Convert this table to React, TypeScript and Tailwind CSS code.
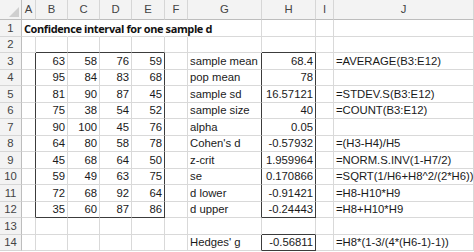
import React, { useLayoutEffect, useRef, useState } from "react";

const cols = ["A", "B", "C", "D", "E", "F", "G", "H", "I", "J"];

type Row = {
  nums?: (string | number)[];
  g?: string;
  h?: string;
  j?: string;
};

const rows: Record<number, Row> = {
  3: { nums: [63, 58, 76, 59], g: "sample mean", h: "68.4", j: "=AVERAGE(B3:E12)" },
  4: { nums: [95, 84, 83, 68], g: "pop mean", h: "78" },
  5: { nums: [81, 90, 87, 45], g: "sample sd", h: "16.57121", j: "=STDEV.S(B3:E12)" },
  6: { nums: [75, 38, 54, 52], g: "sample size", h: "40", j: "=COUNT(B3:E12)" },
  7: { nums: [90, 100, 45, 76], g: "alpha", h: "0.05" },
  8: { nums: [64, 80, 58, 78], g: "Cohen's d", h: "-0.57932", j: "=(H3-H4)/H5" },
  9: { nums: [45, 68, 64, 50], g: "z-crit", h: "1.959964", j: "=NORM.S.INV(1-H7/2)" },
  10: { nums: [59, 49, 63, 75], g: "se", h: "0.170866", j: "=SQRT(1/H6+H8^2/(2*H6))" },
  11: { nums: [72, 68, 92, 64], g: "d lower", h: "-0.91421", j: "=H8-H10*H9" },
  12: { nums: [35, 60, 87, 86], g: "d upper", h: "-0.24443", j: "=H8+H10*H9" },
  14: { g: "Hedges' g", h: "-0.56811", j: "=H8*(1-3/(4*(H6-1)-1))" },
};

const TITLE = "Confidence interval for one sample d";
const TITLE_WIDTH = 188;

function Title() {
  const ref = useRef<HTMLSpanElement>(null);
  const [ls, setLs] = useState(0);
  useLayoutEffect(() => {
    const measure = () => {
      const el = ref.current;
      if (!el) return;
      const prev = el.style.letterSpacing;
      el.style.letterSpacing = "0px";
      const w = el.getBoundingClientRect().width;
      el.style.letterSpacing = prev;
      setLs((TITLE_WIDTH - w) / TITLE.length);
    };
    measure();
    if (document.fonts && document.fonts.ready) {
      document.fonts.ready.then(measure);
    }
  }, []);
  return (
    <span
      ref={ref}
      className="font-bold text-[#111111] relative z-10 text-[11px] whitespace-nowrap"
      style={{ fontFamily: "'Open Sans', 'Liberation Sans', sans-serif", letterSpacing: `${ls}px` }}
    >
      {TITLE}
    </span>
  );
}

function Cell({
  r,
  c,
  children,
}: {
  r: number;
  c: number;
  children?: React.ReactNode;
}) {
  const inBoxRows = r >= 3 && r <= 12;
  let right = "border-r-[#d9d9d9]";
  let bottom = "border-b-[#d9d9d9]";
  if (c === 0 && inBoxRows) right = "border-r-[#3c3c3c]";
  if (c === 4 && inBoxRows) right = "border-r-[#3c3c3c]";
  if (c === 6 && (inBoxRows || r === 14)) right = "border-r-[#3c3c3c]";
  if (c === 7 && (inBoxRows || r === 14)) right = "border-r-[#3c3c3c]";
  if (c >= 1 && c <= 4 && (r === 2 || r === 12)) bottom = "border-b-[#3c3c3c]";
  if (c === 7 && (r === 2 || r === 12 || r === 13 || r === 14)) bottom = "border-b-[#3c3c3c]";
  if (r === 1 && c <= 5) right = "border-r-transparent";
  const numeric = (c >= 1 && c <= 4) || c === 7;
  return (
    <div
      className={`relative border-r border-b ${right} ${bottom} flex items-center pt-[1px] overflow-visible whitespace-nowrap ${
        numeric ? "justify-end pr-[2px]" : "justify-start pl-[2px]"
      }`}
    >
      {children}
    </div>
  );
}

export default function App() {
  const body: React.ReactNode[] = [];
  for (let r = 1; r <= 14; r++) {
    body.push(
      <div
        key={`rh${r}`}
        className="bg-[#f3f3f3] border-r border-b border-r-[#bdbdbd] border-b-[#d6d6d6] flex items-center justify-center pt-[1px] text-[#444444]"
      >
        {r}
      </div>
    );
    const row = rows[r];
    for (let c = 0; c < 10; c++) {
      let content: React.ReactNode = null;
      if (r === 1 && c === 0) {
        content = <Title />;
      } else if (row) {
        if (c >= 1 && c <= 4 && row.nums) content = row.nums[c - 1];
        if (c === 6 && row.g) content = row.g;
        if (c === 7 && row.h) content = row.h;
        if (c === 9 && row.j) content = row.j;
      }
      body.push(
        <Cell key={`${r}-${c}`} r={r} c={c}>
          {content}
        </Cell>
      );
    }
  }

  return (
    <div
      className="w-[474px] h-[252px] overflow-hidden bg-white text-[11.3px] text-[#1a1a1a] leading-none"
      style={{ fontFamily: "'Liberation Sans', Arial, sans-serif" }}
    >
      <div className="grid grid-cols-[22px_14px_32px_32px_32px_33px_23px_74px_54px_18px_140px] grid-rows-[20px_repeat(14,16.5px)]">
        <div className="bg-[#f3f3f3] border-r border-b border-r-[#bdbdbd] border-b-[#bdbdbd] flex items-end justify-end p-[2px]">
          <svg width="10" height="10" viewBox="0 0 10 10">
            <polygon points="10,0 10,10 0,10" fill="#cfcfcf" />
          </svg>
        </div>
        {cols.map((l) => (
          <div
            key={l}
            className="bg-[#f3f3f3] border-r border-b border-r-[#d6d6d6] border-b-[#bdbdbd] flex items-center justify-center text-[#444444]"
          >
            {l}
          </div>
        ))}
        {body}
      </div>
    </div>
  );
}
